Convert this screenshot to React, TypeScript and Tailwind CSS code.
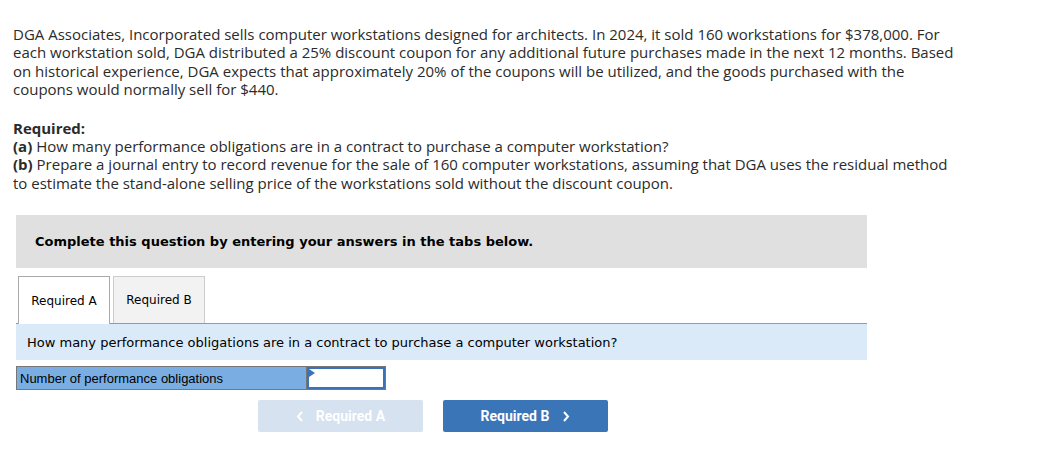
export default function App() {
  return (
    <div className="bg-white w-[1037px] h-[463px] overflow-hidden text-[#333]">
      <div className="pl-[13px] pt-[25px] font-['Open_Sans',sans-serif] text-[15px] leading-[18.4px] text-[#2b2b2b] whitespace-nowrap">
        <p>
          DGA Associates, Incorporated sells computer workstations designed for architects. In 2024, it sold 160 workstations for $378,000. For
          <br />
          each workstation sold, DGA distributed a 25% discount coupon for any additional future purchases made in the next 12 months. Based
          <br />
          on historical experience, DGA expects that approximately 20% of the coupons will be utilized, and the goods purchased with the
          <br />
          coupons would normally sell for $440.
        </p>
        <p className="mt-[20px] font-bold">Required:</p>
        <p>
          <b>(a)</b> How many performance obligations are in a contract to purchase a computer workstation?
        </p>
        <p>
          <b>(b)</b> Prepare a journal entry to record revenue for the sale of 160 computer workstations, assuming that DGA uses the residual method
          <br />
          to estimate the stand-alone selling price of the workstations sold without the discount coupon.
        </p>
      </div>

      <div className="ml-[16px] w-[851px] mt-[23px]">
        <div className="bg-[#e0e0e0] h-[53px] flex items-center pl-[19px] font-['DejaVu_Sans',sans-serif] text-[13px] font-bold text-black">
          Complete this question by entering your answers in the tabs below.
        </div>

        <div className="mt-[8px] flex items-end gap-[3px] pl-[2px] border-b border-[#999] h-[48px] font-['DejaVu_Sans',sans-serif] text-[12px] text-black">
          <div className="w-[92px] h-[48px] -mb-px bg-white border border-b-0 border-[#aaa] flex items-center justify-center">
            Required A
          </div>
          <div className="w-[92px] h-[47px] bg-[#f2f2f2] border border-b-0 border-[#ccc] flex items-center justify-center">
            Required B
          </div>
        </div>

        <div className="bg-[#daeaf8] h-[36px] flex items-center pl-[11px] font-['DejaVu_Sans',sans-serif] text-[13px] text-black">
          How many performance obligations are in a contract to purchase a computer workstation?
        </div>

        <div className="mt-[6px] flex w-[370px] h-[24px] border border-[#777] font-['Liberation_Sans',sans-serif] text-[13px] text-black">
          <div className="w-[290px] bg-[#7aaee3] border-r border-[#777] flex items-center pl-[3px]">
            Number of performance obligations
          </div>
          <div className="relative flex-1 bg-white border-2 border-[#3b72b9]">
            <div className="absolute left-0 top-0 w-0 h-0 border-t-[4px] border-b-[4px] border-l-[6px] border-t-transparent border-b-transparent border-l-[#3b72b9]" />
          </div>
        </div>

        <div className="mt-[10px] flex gap-[20px] pl-[242px] font-['Roboto',sans-serif] text-[14px] font-bold text-white">
          <div className="w-[165px] h-[32px] rounded-[2px] bg-[#d6e2f0] flex items-center justify-center gap-[12px]">
            <svg width="8" height="11" viewBox="0 0 8 11" fill="none" stroke="white" strokeWidth="2"><path d="M6 1 L2 5.5 L6 10" /></svg>
            <span>Required A</span>
          </div>
          <div className="w-[165px] h-[32px] rounded-[2px] bg-[#3a75b8] flex items-center justify-center gap-[13px]">
            <span>Required B</span>
            <svg width="8" height="11" viewBox="0 0 8 11" fill="none" stroke="white" strokeWidth="2"><path d="M2 1 L6 5.5 L2 10" /></svg>
          </div>
        </div>
      </div>
    </div>
  );
}
